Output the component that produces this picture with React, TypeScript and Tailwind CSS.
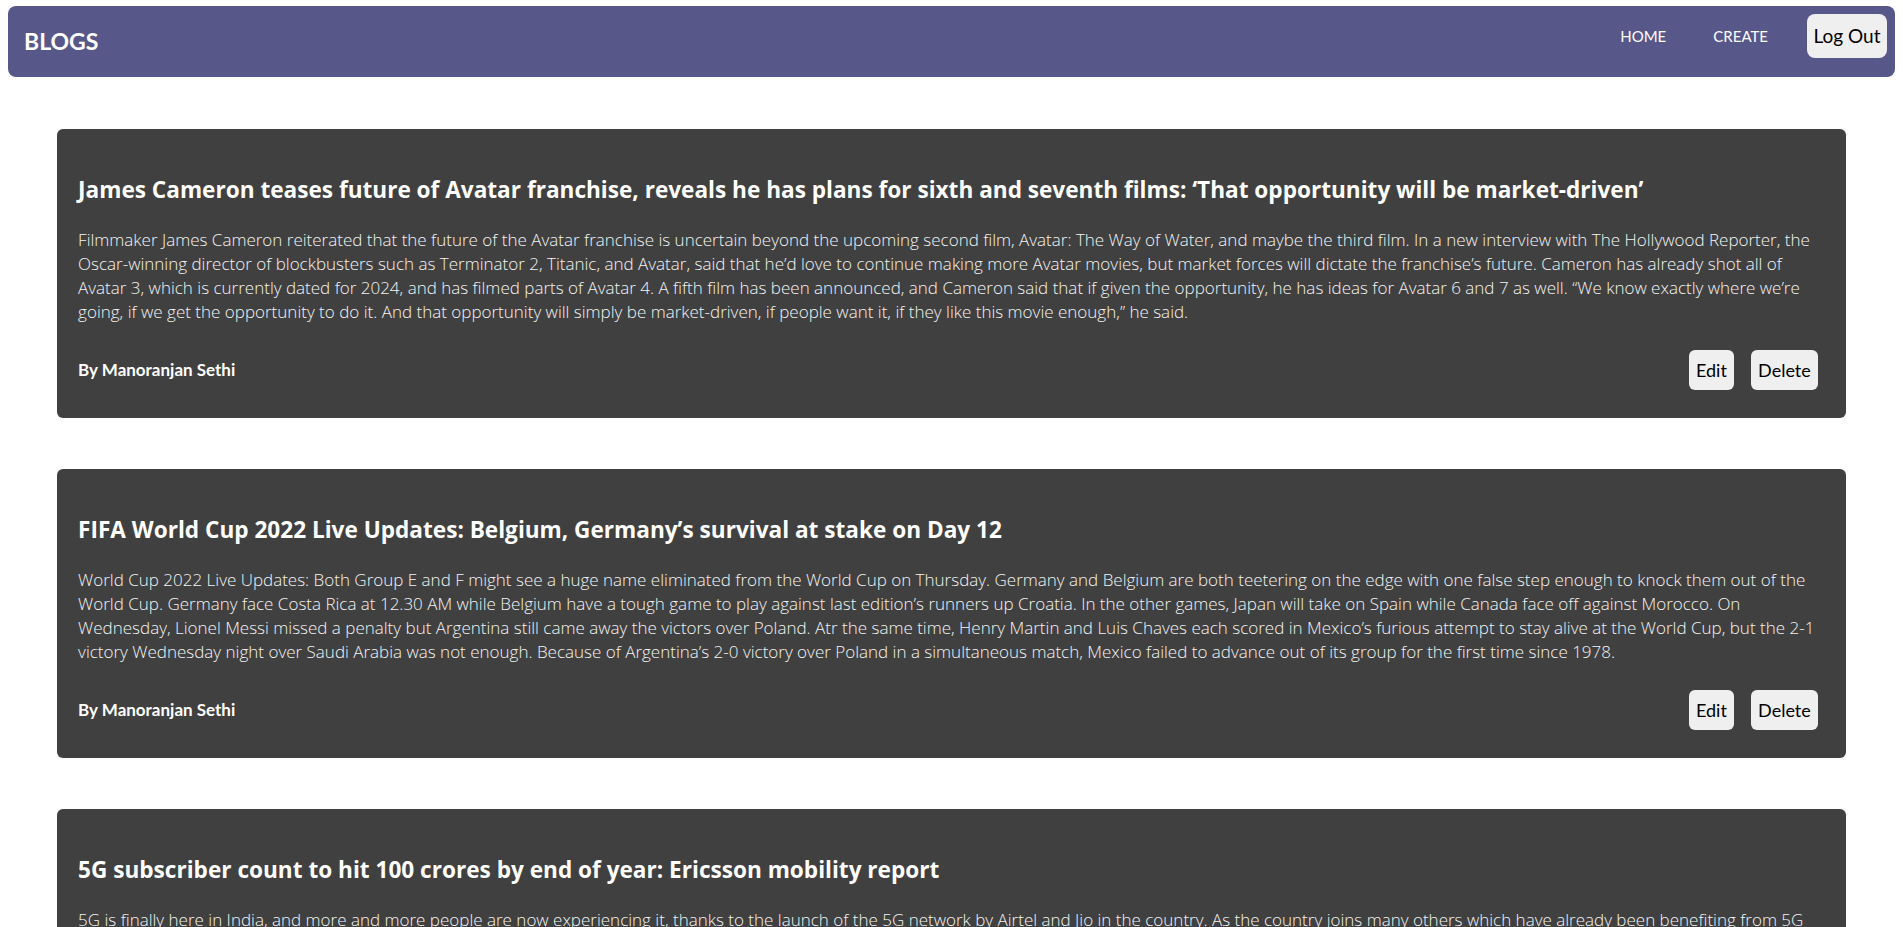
const posts = [
  {
    title:
      "James Cameron teases future of Avatar franchise, reveals he has plans for sixth and seventh films: ‘That opportunity will be market-driven’",
    body: "Filmmaker James Cameron reiterated that the future of the Avatar franchise is uncertain beyond the upcoming second film, Avatar: The Way of Water, and maybe the third film. In a new interview with The Hollywood Reporter, the Oscar-winning director of blockbusters such as Terminator 2, Titanic, and Avatar, said that he’d love to continue making more Avatar movies, but market forces will dictate the franchise’s future. Cameron has already shot all of Avatar 3, which is currently dated for 2024, and has filmed parts of Avatar 4. A fifth film has been announced, and Cameron said that if given the opportunity, he has ideas for Avatar 6 and 7 as well. “We know exactly where we’re going, if we get the opportunity to do it. And that opportunity will simply be market-driven, if people want it, if they like this movie enough,” he said.",
    author: "Manoranjan Sethi",
  },
  {
    title:
      "FIFA World Cup 2022 Live Updates: Belgium, Germany’s survival at stake on Day 12",
    body: "World Cup 2022 Live Updates: Both Group E and F might see a huge name eliminated from the World Cup on Thursday. Germany and Belgium are both teetering on the edge with one false step enough to knock them out of the World Cup. Germany face Costa Rica at 12.30 AM while Belgium have a tough game to play against last edition’s runners up Croatia. In the other games, Japan will take on Spain while Canada face off against Morocco. On Wednesday, Lionel Messi missed a penalty but Argentina still came away the victors over Poland. Atr the same time, Henry Martin and Luis Chaves each scored in Mexico’s furious attempt to stay alive at the World Cup, but the 2-1 victory Wednesday night over Saudi Arabia was not enough. Because of Argentina’s 2-0 victory over Poland in a simultaneous match, Mexico failed to advance out of its group for the first time since 1978.",
    author: "Manoranjan Sethi",
  },
  {
    title:
      "5G subscriber count to hit 100 crores by end of year: Ericsson mobility report",
    body: "5G is finally here in India, and more and more people are now experiencing it, thanks to the launch of the 5G network by Airtel and Jio in the country. As the country joins many others which have already been benefiting from 5G technology, the latest Ericsson Mobility Report says that global 5G subscriptions are expected to cross 100 crores by the end of this year, driven by rapid adoption in North America and North East Asia.",
    author: "Manoranjan Sethi",
  },
];

function Navbar() {
  return (
    <nav className="mx-2 mt-[6px] flex h-[71px] items-center justify-between rounded-lg bg-[#575789] pl-4 pr-[8px] font-['Lato',sans-serif]">
      <span className="text-[23px] font-bold text-white">BLOGS</span>
      <div className="mt-[8px] flex items-center self-start">
        <a className="text-[15px] text-white">HOME</a>
        <a className="ml-[47px] text-[15px] text-white">CREATE</a>
        <button className="ml-[39px] h-[44px] w-[80px] rounded-lg bg-[#efefef] text-[19px] text-black">
          Log Out
        </button>
      </div>
    </nav>
  );
}

function PostCard({ post }: { post: (typeof posts)[number] }) {
  return (
    <article className="mx-auto w-[94%] rounded-md bg-[#404040] pb-[28px] pl-[21px] pr-[16px] pt-[46px] text-white">
      <h2 className="font-['Open_Sans',sans-serif] text-[22.6px] font-bold leading-[30px]">
        {post.title}
      </h2>
      <p className="mt-[23px] font-['Open_Sans',sans-serif] text-[17px] font-light leading-[24px] text-[#f4f4f4]">
        {post.body}
      </p>
      <div className="mt-[26px] mr-[12px] flex h-[40px] items-center justify-between font-['Lato',sans-serif]">
        <span className="text-[17px] font-bold">By {post.author}</span>
        <div className="flex gap-[17px]">
          <button className="h-[40px] w-[45px] rounded-md bg-[#efefef] text-[18px] text-black">
            Edit
          </button>
          <button className="h-[40px] w-[67px] rounded-md bg-[#efefef] text-[18px] text-black">
            Delete
          </button>
        </div>
      </div>
    </article>
  );
}

export default function App() {
  return (
    <div className="min-h-screen bg-white font-['Lato',sans-serif]">
      <Navbar />
      <main className="mt-[52px] flex flex-col gap-[51px] pb-10">
        {posts.map((post) => (
          <PostCard key={post.title} post={post} />
        ))}
      </main>
    </div>
  );
}
